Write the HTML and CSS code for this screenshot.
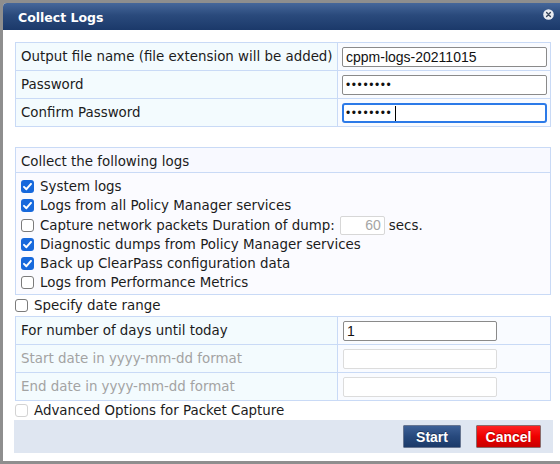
FILE: index.html
```html
<!DOCTYPE html>
<html>
<head>
<meta charset="utf-8">
<link rel="stylesheet" href="styles.css">
</head>
<body>
<div class="dialog">
  <div class="titlebar">
    <span class="title">Collect Logs</span>
    <span class="close"><svg width="11" height="11" viewBox="0 0 11 11"><circle cx="5.5" cy="5.5" r="5.3" fill="#e9ecf1"/><path d="M3.6 3.6 L7.4 7.4 M7.4 3.6 L3.6 7.4" stroke="#3c4a5e" stroke-width="1.4" stroke-linecap="round"/></svg></span>
  </div>
  <div class="content">
    <table class="grid">
      <tr>
        <td class="lbl">Output file name (file extension will be added)</td>
        <td class="fld"><input class="txt wide" type="text" value="cppm-logs-20211015"></td>
      </tr>
      <tr>
        <td class="lbl">Password</td>
        <td class="fld"><input class="txt wide pw" type="password" value="abcdefgh"></td>
      </tr>
      <tr>
        <td class="lbl">Confirm Password</td>
        <td class="fld"><div class="focuswrap"><input class="txt wide pw focus" type="password" value="abcdefgh"><span class="caret"></span></div></td>
      </tr>
    </table>

    <div class="section">
      <div class="sec-head">Collect the following logs</div>
      <div class="sec-body">
        <div class="row"><span class="cb on"><svg width="13" height="13" viewBox="0 0 13 13"><path d="M3 6.9 L5.4 9.2 L10 3.9" fill="none" stroke="#fff" stroke-width="2" stroke-linecap="round" stroke-linejoin="round"/></svg></span>System logs</div>
        <div class="row"><span class="cb on"><svg width="13" height="13" viewBox="0 0 13 13"><path d="M3 6.9 L5.4 9.2 L10 3.9" fill="none" stroke="#fff" stroke-width="2" stroke-linecap="round" stroke-linejoin="round"/></svg></span>Logs from all Policy Manager services</div>
        <div class="row tall"><span class="cb"></span>Capture network packets Duration of dump:<input class="secs" type="text" value="60" disabled><span class="unit">secs.</span></div>
        <div class="row"><span class="cb on"><svg width="13" height="13" viewBox="0 0 13 13"><path d="M3 6.9 L5.4 9.2 L10 3.9" fill="none" stroke="#fff" stroke-width="2" stroke-linecap="round" stroke-linejoin="round"/></svg></span>Diagnostic dumps from Policy Manager services</div>
        <div class="row"><span class="cb on"><svg width="13" height="13" viewBox="0 0 13 13"><path d="M3 6.9 L5.4 9.2 L10 3.9" fill="none" stroke="#fff" stroke-width="2" stroke-linecap="round" stroke-linejoin="round"/></svg></span>Back up ClearPass configuration data</div>
        <div class="row"><span class="cb"></span>Logs from Performance Metrics</div>
      </div>
    </div>

    <div class="opt"><span class="cb"></span>Specify date range</div>

    <table class="grid">
      <tr>
        <td class="lbl">For number of days until today</td>
        <td class="fld"><input class="txt short" type="text" value="1"></td>
      </tr>
      <tr>
        <td class="lbl dis">Start date in yyyy-mm-dd format</td>
        <td class="fld"><input class="txt short off" type="text" value="" disabled></td>
      </tr>
      <tr>
        <td class="lbl dis">End date in yyyy-mm-dd format</td>
        <td class="fld"><input class="txt short off" type="text" value="" disabled></td>
      </tr>
    </table>

    <div class="opt adv"><span class="cb off"></span>Advanced Options for Packet Capture</div>

    <div class="buttons">
      <button class="btn start">Start</button>
      <button class="btn cancel">Cancel</button>
    </div>
  </div>
</div>
</body>
</html>
```
FILE: styles.css
```css
html, body {
  margin: 0;
  padding: 0;
  overflow: hidden;
}
body {
  background: #8e8e8e;
  width: 560px;
  height: 464px;
  font-family: "DejaVu Sans", Verdana, sans-serif;
  font-size: 13.4px;
  color: #1c1c1c;
}
.dialog {
  margin: 3px 0 0 3px;
  width: 562px;
  height: 458px;
  background: #fff;
  border-radius: 4px 4px 0 0;
  overflow: hidden;
}
.titlebar {
  height: 27px;
  background: linear-gradient(#46679a, #2a4a7c 45%, #1b396a);
  display: flex;
  align-items: center;
  justify-content: space-between;
  padding: 0 11px 0 15px;
}
.title {
  color: #fff;
  font-weight: bold;
  font-size: 12.5px;
  padding-top: 1px;
}
.close {
  display: flex;
  margin-top: -4px;
}
.content {
  padding: 12px 14px 0 12px;
}
.grid {
  border-collapse: collapse;
  width: 536px;
}
.grid td {
  border: 1px solid #c9daf6;
  height: 27px;
  padding: 0;
}
.lbl {
  width: 316px;
  padding-left: 5px !important;
  background: #f3fbfe;
}
.lbl.dis {
  color: #a3a3a3;
}
.fld {
  background: #f9fbff;
  padding-left: 4px !important;
}
.txt {
  box-sizing: border-box;
  height: 20px;
  border: 1px solid #8a8a8a;
  border-radius: 2px;
  background: #fff;
  font-family: "Liberation Sans", Arial, sans-serif;
  font-size: 14px;
  color: #111;
  padding: 0 3px;
  margin: 0;
  display: block;
  outline: none;
}
.pw {
  font-size: 12px;
  letter-spacing: 1.6px;
}
.wide {
  width: 205px;
}
.short {
  width: 154px;
  margin-left: 1px;
}
.off {
  border-color: #dcdcdc;
}
.focuswrap {
  position: relative;
  width: 205px;
}
.focus {
  border: 2px solid #2c7ae8;
  border-radius: 3px;
  padding-left: 2px;
}
.caret {
  position: absolute;
  left: 53px;
  top: 3px;
  width: 1px;
  height: 15px;
  background: #000;
}
.section {
  margin-top: 20px;
  width: 536px;
}
.sec-head {
  box-sizing: border-box;
  height: 26px;
  border: 1px solid #c9daf6;
  background: #f8f9ff;
  padding: 2px 0 0 5px;
  display: flex;
  align-items: center;
}
.sec-body {
  box-sizing: border-box;
  height: 122px;
  border: 1px solid #c9daf6;
  border-top: none;
  background: #fbfbff;
  padding: 4px 5px 1px 5px;
}
.row {
  height: 19px;
  display: flex;
  align-items: center;
}
.row.tall {
  height: 20px;
}
.cb {
  box-sizing: border-box;
  width: 13px;
  height: 13px;
  border: 1px solid #7b7b7b;
  border-radius: 3px;
  background: #fff;
  margin-right: 6px;
  display: flex;
  align-items: center;
  justify-content: center;
  flex: none;
}
.cb.on {
  border: none;
  background: #1769dc;
}
.cb.off {
  border-color: #d3d3d3;
}
.secs {
  box-sizing: border-box;
  width: 45px;
  height: 19px;
  margin: 0 4px 0 5px;
  border: 1px solid #d7d7d7;
  border-radius: 2px;
  background: #fff;
  text-align: right;
  color: #a5a5a5;
  font-family: "Liberation Sans", Arial, sans-serif;
  font-size: 14px;
  padding: 0 3px;
}
.opt {
  height: 21px;
  display: flex;
  align-items: center;
}
.adv {
  height: 19px;
}
.buttons {
  margin-left: -1px;
  width: 539px;
  height: 33px;
  background: #dfe6f1;
  display: flex;
  align-items: center;
  justify-content: flex-end;
  gap: 15px;
  padding-right: 12px;
  box-sizing: border-box;
}
.btn {
  height: 23px;
  font-family: "Liberation Sans", Arial, sans-serif;
  font-weight: bold;
  font-size: 14px;
  color: #fff;
  padding: 0;
  border-radius: 1px;
  text-shadow: 0 -1px 0 rgba(0,0,0,0.35);
}
.start {
  width: 58px;
  border: 1px solid #667591;
  background: linear-gradient(#3d6096, #27497d 50%, #1b3a69);
}
.cancel {
  width: 65px;
  border: 1px solid #8b6a6a;
  background: linear-gradient(#ff2222, #ee0000 50%, #c90000);
}
```
